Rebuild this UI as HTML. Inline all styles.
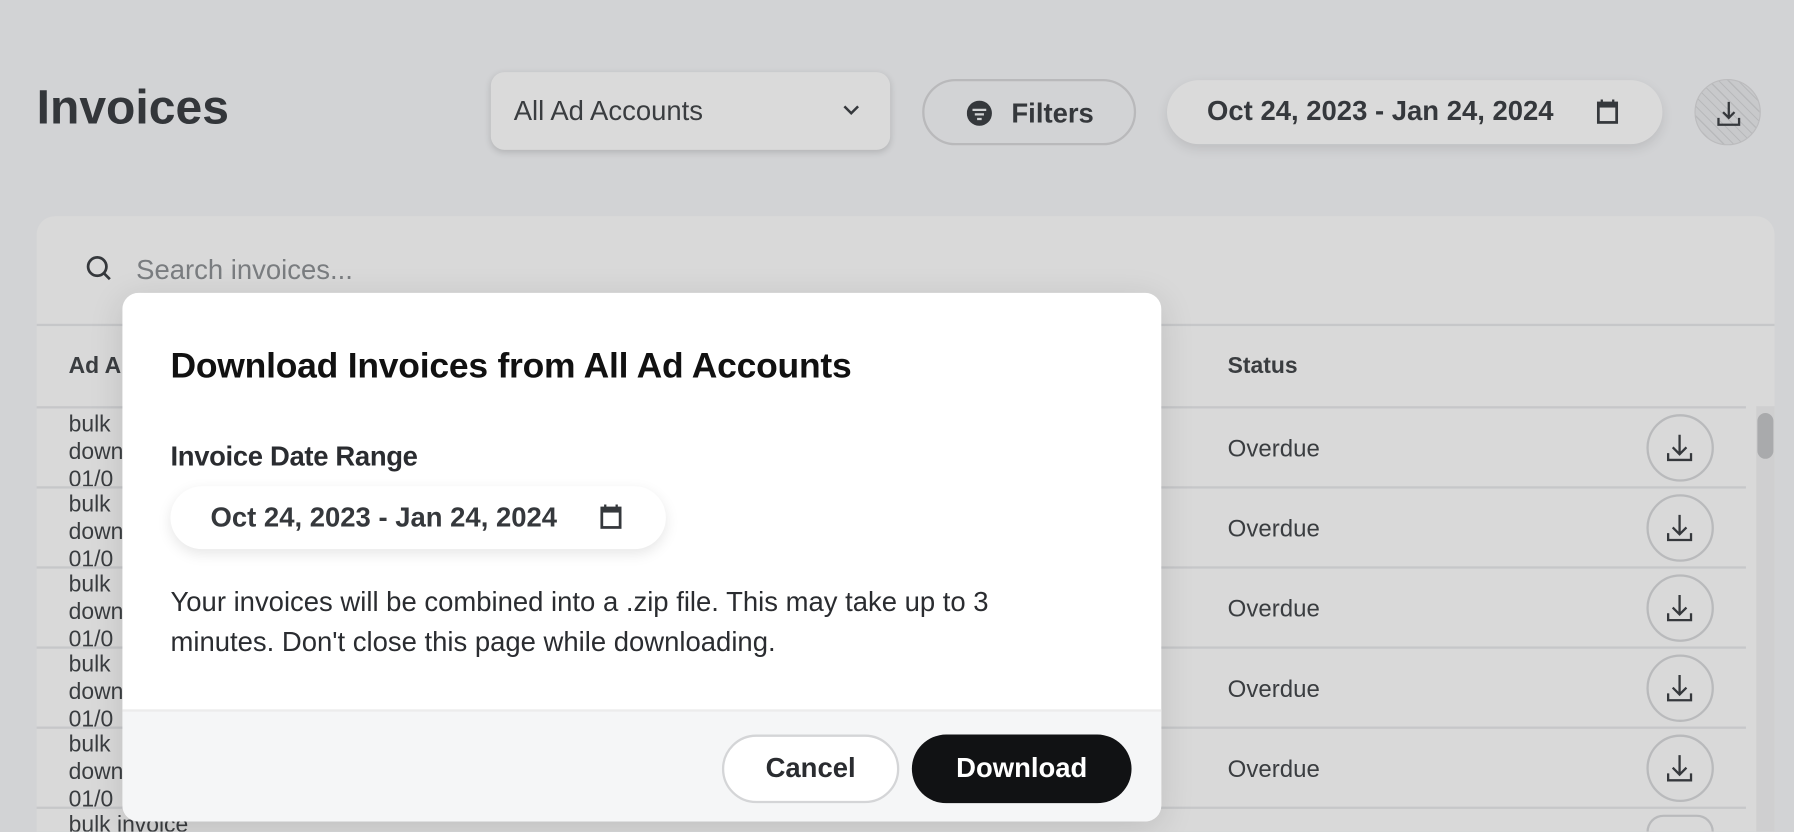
<!DOCTYPE html>
<html><head><meta charset="utf-8"><style>
*{box-sizing:border-box;margin:0;padding:0}
html,body{width:1794px;height:832px;overflow:hidden;background:#d2d3d5}
#s{position:absolute;left:0;top:0;width:1568px;height:727px;transform:scale(1.14413);transform-origin:0 0;font-family:"Liberation Sans",sans-serif;color:#35383c;background:#d2d3d5;overflow:hidden}
.a{position:absolute}
.pill{position:absolute;border-radius:30px;display:flex;align-items:center}
.row{position:absolute;left:32px;width:1494px;height:70px;border-top:2px solid #c6c7c9;overflow:hidden}
.row .t{position:absolute;left:28px;top:2px;font-size:20px;line-height:24px;color:#3a3d40}
.row .o{position:absolute;left:1041px;top:24px;font-size:21px;color:#3a3d40}
.d{position:absolute;left:1439px;width:59px;height:59px;border:2px solid #b9babc;border-radius:50%}
</style></head><body><div id="s">
<div class="a" style="left:32px;top:70px;font-size:42px;font-weight:bold;color:#33363a">Invoices</div>
<div class="a" style="left:429px;top:63px;width:349px;height:68px;background:#dadada;border-radius:12px;box-shadow:0 2px 6px rgba(0,0,0,.15)">
<div class="a" style="left:20px;top:21px;font-size:24px;color:#3a3d40">All Ad Accounts</div>
<svg class="a" style="left:306px;top:26px" width="18" height="14" viewBox="0 0 18 14"><path d="M3 4l6 6 6-6" stroke="#35383c" stroke-width="2.2" fill="none"/></svg></div>
<div class="pill" style="left:806px;top:69px;width:187px;height:58px;border:2px solid #b9b9bb">
<svg class="a" style="left:37px;top:17px" width="22" height="22" viewBox="0 0 22 22"><circle cx="11" cy="11" r="11" fill="#35383c"/><path d="M5 8h12M7 12h8M9 16h4" stroke="#d2d3d5" stroke-width="2"/></svg>
<span class="a" style="left:76px;top:15px;font-size:24px;font-weight:bold">Filters</span></div>
<div class="pill" style="left:1020px;top:70px;width:433px;height:56px;background:#dadada;box-shadow:0 4px 10px rgba(0,0,0,.1)">
<span class="a" style="left:35px;top:14px;font-size:24px;font-weight:bold">Oct 24, 2023 - Jan 24, 2024</span>
<svg class="a" style="left:375px;top:15px" width="20" height="24" viewBox="0 0 20 24"><rect x="2" y="5" width="16" height="17" fill="none" stroke="#35383c" stroke-width="2.4"/><rect x="2" y="5" width="16" height="4" fill="#35383c"/><path d="M5 2v4M15 2v4" stroke="#35383c" stroke-width="2"/></svg></div>
<div class="a" style="left:1481px;top:69px;width:58px;height:58px;border-radius:50%;border:1px solid #bcbcbe;background:repeating-linear-gradient(45deg,#c8c9cb 0 5px,#b8b9bb 5px 6px)">
<svg class="a" style="left:16px;top:16px" width="26" height="26" viewBox="0 0 26 26"><path d="M13 3v14M8 12l5 5 5-5M4 17v6h18v-6" stroke="#35383c" stroke-width="2" fill="none"/></svg></div>
<div class="a" style="left:32px;top:189px;width:1519px;height:538px;background:#d9d9d9;border-radius:16px 16px 0 0;overflow:hidden">
<svg class="a" style="left:42px;top:33px" width="26" height="26" viewBox="0 0 26 26"><circle cx="11" cy="11" r="8" fill="none" stroke="#35383c" stroke-width="2.4"/><path d="M17 17l5 5" stroke="#35383c" stroke-width="2.4"/></svg>
<div class="a" style="left:87px;top:34px;font-size:24px;color:#7a7d80">Search invoices...</div>
<div class="a" style="left:0;top:94px;width:1519px;border-top:2px solid #c6c7c9"></div>
<div class="a" style="left:28px;top:120px;font-size:20px;font-weight:bold;color:#3a3d40">Ad A</div>
<div class="a" style="left:1041px;top:120px;font-size:20px;font-weight:bold;color:#3a3d40">Status</div>
<div class="a" style="left:1503px;top:166px;width:16px;height:372px;background:#cfcfd0"></div>
<div class="a" style="left:1504px;top:172px;width:14px;height:40px;background:#a9aaac;border-radius:7px"></div>
</div>
<div class="row" style="top:355px"><div class="t">bulk<br>down<br>01/0</div><div class="o">Overdue</div></div>
<div class="row" style="top:425px"><div class="t">bulk<br>down<br>01/0</div><div class="o">Overdue</div></div>
<div class="row" style="top:495px"><div class="t">bulk<br>down<br>01/0</div><div class="o">Overdue</div></div>
<div class="row" style="top:565px"><div class="t">bulk<br>down<br>01/0</div><div class="o">Overdue</div></div>
<div class="row" style="top:635px"><div class="t">bulk<br>down<br>01/0</div><div class="o">Overdue</div></div>
<div class="row" style="top:705px;height:22px"><div class="t">bulk invoice</div></div>
<div class="d" style="top:362px"></div><div class="d" style="top:432px"></div><div class="d" style="top:502px"></div><div class="d" style="top:572px"></div><div class="d" style="top:642px"></div><div class="d" style="top:712px;height:15px;border-bottom:0;border-radius:30px 30px 0 0"></div>
<svg class="a" style="left:0;top:0" width="1568" height="727"><g stroke="#35383c" stroke-width="2" fill="none">
<path d="M1468 380v16M1462 391l6 6 6-6M1458 396v6h20v-6"/><path d="M1468 450v16M1462 461l6 6 6-6M1458 466v6h20v-6"/><path d="M1468 520v16M1462 531l6 6 6-6M1458 536v6h20v-6"/><path d="M1468 590v16M1462 601l6 6 6-6M1458 606v6h20v-6"/><path d="M1468 660v16M1462 671l6 6 6-6M1458 676v6h20v-6"/></g></svg>
<div class="a" style="left:107px;top:256px;width:908px;height:462px;background:#fff;border-radius:14px;overflow:hidden;box-shadow:0 6px 30px rgba(0,0,0,.12)">
<div class="a" style="left:42px;top:46px;font-size:31px;font-weight:bold;color:#111;letter-spacing:-.2px">Download Invoices from All Ad Accounts</div>
<div class="a" style="left:42px;top:130px;font-size:24px;font-weight:bold;color:#2a2c30;letter-spacing:-.3px">Invoice Date Range</div>
<div class="pill" style="left:42px;top:169px;width:433px;height:55px;background:#fff;box-shadow:0 4px 12px rgba(0,0,0,.1)">
<span class="a" style="left:35px;top:14px;font-size:24px;font-weight:bold">Oct 24, 2023 - Jan 24, 2024</span>
<svg class="a" style="left:375px;top:14px" width="20" height="24" viewBox="0 0 20 24"><rect x="2" y="5" width="16" height="17" fill="none" stroke="#35383c" stroke-width="2.4"/><rect x="2" y="5" width="16" height="4" fill="#35383c"/><path d="M5 2v4M15 2v4" stroke="#35383c" stroke-width="2"/></svg></div>
<div class="a" style="left:42px;top:253px;width:790px;font-size:24px;line-height:35px;color:#2a2c30">Your invoices will be combined into a .zip file. This may take up to 3 minutes. Don't close this page while downloading.</div>
<div class="a" style="left:0;top:364px;width:908px;height:98px;background:#f5f6f7;border-top:2px solid #ececec">
<div class="pill" style="left:524px;top:20px;width:155px;height:60px;background:#fff;border:2px solid #d4d5d7;justify-content:center;font-size:24px;font-weight:bold;color:#2a2c30">Cancel</div>
<div class="pill" style="left:690px;top:20px;width:192px;height:60px;background:#111214;justify-content:center;font-size:24px;font-weight:bold;color:#fff">Download</div>
</div></div>
</div></body></html>
